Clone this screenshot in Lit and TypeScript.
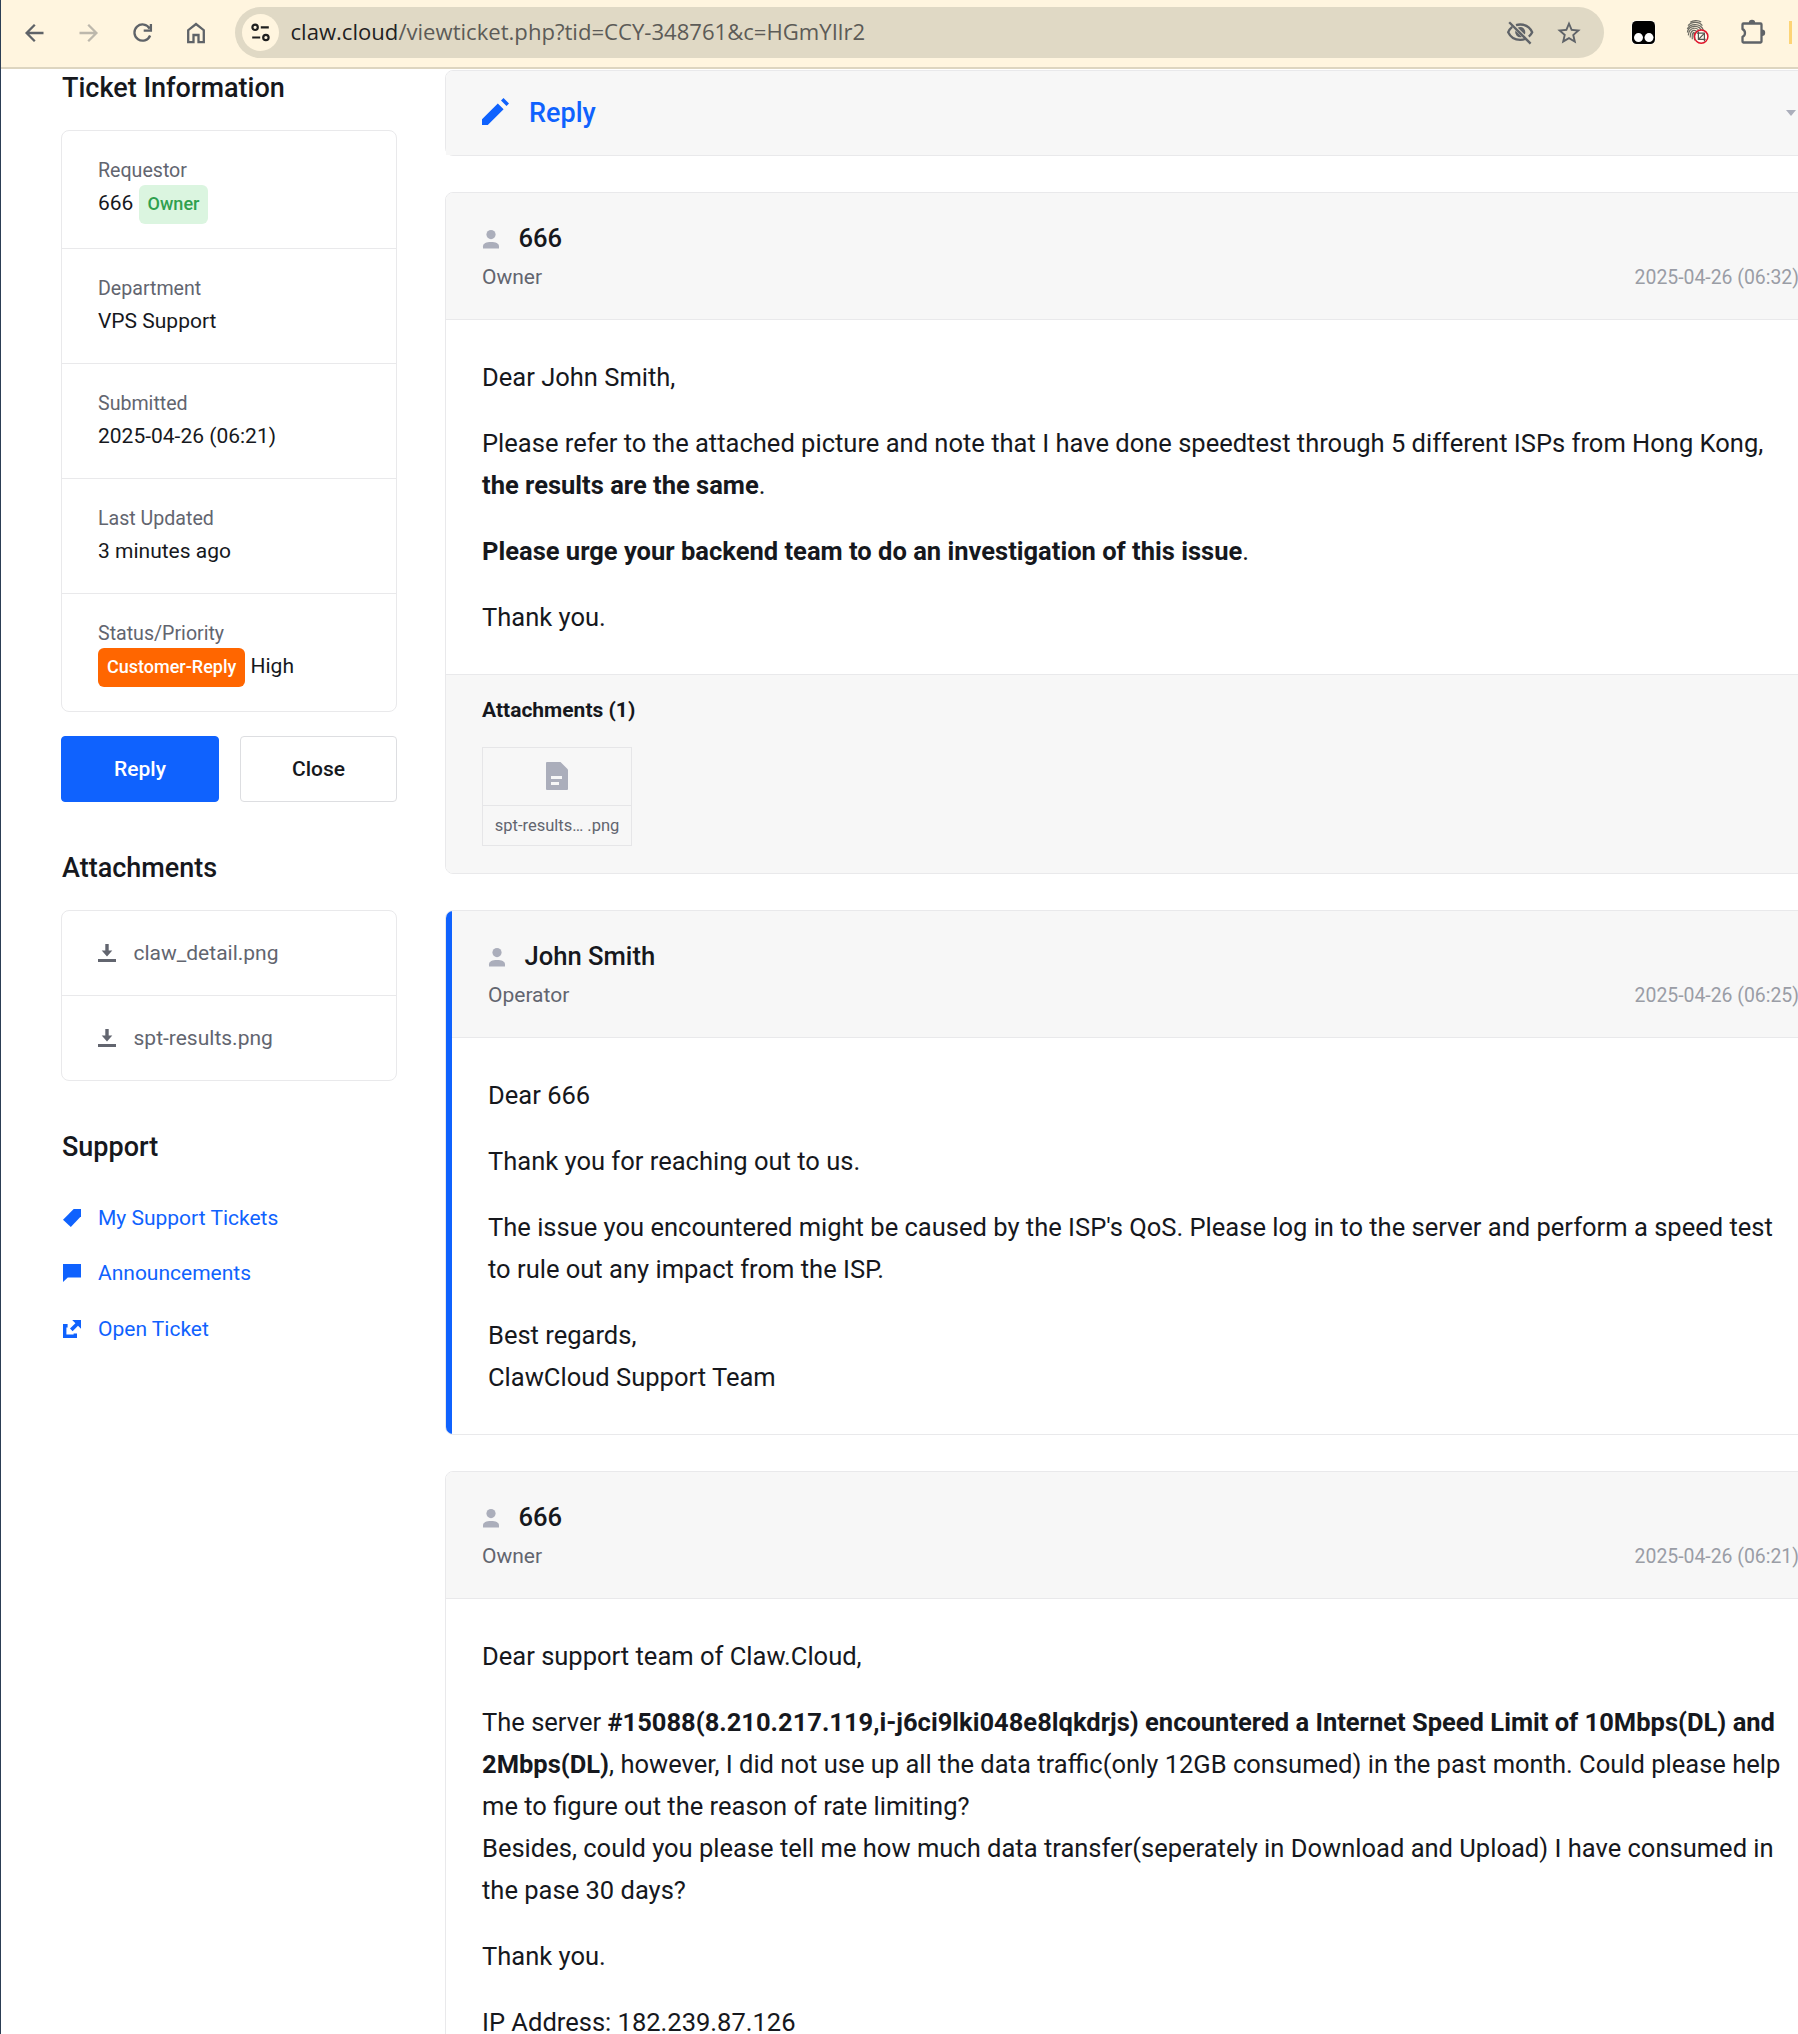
import { LitElement, html, svg, css, nothing, type TemplateResult } from "lit";
import { customElement, property } from "lit/decorators.js";

const personIcon = svg`<circle cx="8" cy="4.6" r="4.6"/><path d="M0 18.4v-2.2c0-2.8 3.4-4.2 8-4.2s8 1.400 8 4.200v2.200z"/>`;

@customElement("browser-bar")
export class BrowserBar extends LitElement {
  static styles = css`
    :host { display: block; }
    .bar {
      box-sizing: border-box; height: 69px; background: #fff5df; border-bottom: 2px solid #ddd5c0;
      display: flex; align-items: center; padding: 0 0 2px 19.5px;
      color: #5f6368; overflow: hidden;
    }
    svg { display: block; flex: none; overflow: visible; }
    .nav { display: flex; gap: 28px; align-items: center; }
    .dim { color: #bdb8ac; }
    .omnibox {
      box-sizing: border-box; width: 1369px; height: 51px; margin-left: 26.5px; border-radius: 26px;
      background: #e0d9c5; display: flex; align-items: center; flex: none; padding: 0 21.5px 0 7px;
    }
    .site { width: 37px; height: 37px; border-radius: 50%; background: #fff5df; display: grid; place-items: center; color: #1f1f1f; flex: none; }
    .url {
      flex: 1; margin-left: 11.5px; padding-bottom: 3px; white-space: nowrap; color: #5c5b57;
      font: 400 22.1px/30px "Open Sans", "Noto Sans", sans-serif;
    }
    .host { color: #1f1f1f; }
    .star { margin-left: 20.5px; }
    .ext { display: flex; align-items: center; margin-left: 26px; gap: 27.7px; }
    .sep { width: 3px; height: 23px; background: #fdd475; margin-left: -5.4px; flex: none; }
  `;
  render() {
    return html`
      <div class="bar">
        <div class="nav">
          <svg width="26" height="26" viewBox="0 0 26 26" fill="none" stroke="currentColor" stroke-width="2.3"><path d="M22.500 13H6M13.800 4.800L5.600 13l8.200 8.200"/></svg>
          <svg class="dim" width="26" height="26" viewBox="0 0 26 26" fill="none" stroke="currentColor" stroke-width="2.3"><path d="M4.500 13H21M13.200 4.800L21.400 13l-8.200 8.200"/></svg>
          <svg width="26" height="26" viewBox="0 0 26 26" fill="none" stroke="currentColor" stroke-width="2.3"><path d="M20.600 8.600A8.100 8.100 0 1 0 21.100 15.500M21.900 4v6.700h-7.200"/></svg>
          <svg width="26" height="26" viewBox="0 0 26 26" fill="none" stroke="currentColor" stroke-width="2.3"><path d="M5.200 22.200V10.200L13 4l7.800 6.200v12H15.500v-7.200h-5v7.200z"/></svg>
        </div>
        <div class="omnibox">
          <div class="site">
            <svg width="19" height="19" viewBox="0 0 19 19" fill="none" stroke="currentColor" stroke-width="2.200"><circle cx="4.100" cy="4.300" r="2.700"/><path d="M9.800 4.300h8M1.200 14.500h8"/><circle cx="14.900" cy="14.500" r="2.700"/></svg>
          </div>
          <div class="url"><span class="host">claw.cloud</span>/viewticket.php?tid=CCY-348761&amp;c=HGmYIlr2</div>
          <svg width="28" height="24" viewBox="0 0 28 24" fill="none" stroke="currentColor" stroke-width="2.300">
            <path d="M10 4.200A13 13 0 0 1 14.200 3.500c5.500 0 9.900 3.200 12 7.700a13 13 0 0 1-3.400 4.400M6.200 5.800A13 13 0 0 0 2.200 11.200c2.100 4.500 6.500 7.700 12 7.700 2 0 3.800-.4 5.500-1.200"/>
            <path d="M14.200 6.100a5.100 5.100 0 0 1 5.100 5.100c0 1-.2 1.700-.6 2.400L11.800 6.700c.7-.4 1.500-.6 2.400-.6zM9.400 9.400l6.600 6.600a5.200 5.200 0 0 1-6.600-6.600z" fill="currentColor" stroke="none"/>
            <path d="M3.200 1.200l21.400 21.400"/>
          </svg>
          <svg class="star" width="28" height="28" viewBox="0 0 24 24" fill="currentColor"><path d="M22 9.240l-7.190-.62L12 2 9.190 8.630 2 9.240l5.460 4.730L5.820 21 12 17.270 18.180 21l-1.630-7.030L22 9.240zM12 15.400l-3.760 2.270 1-4.280-3.320-2.880 4.380-.38L12 6.100l1.710 4.040 4.380.38-3.320 2.880 1 4.280L12 15.400z"/></svg>
        </div>
        <div class="ext">
          <svg width="27" height="27" viewBox="0 0 27 27"><rect x="1.400" y="1.400" width="24" height="24" rx="5" fill="#fff"/><rect x="2" y="2" width="23" height="23" rx="4.500" fill="#000"/><circle cx="8.500" cy="18.600" r="4.500" fill="#fff"/><circle cx="19" cy="18.600" r="4.500" fill="#fff"/></svg>
          <svg width="27" height="27" viewBox="0 0 27 27" fill="none" stroke="#6b6a62" stroke-width="1.200">
            <path d="M5.200 3.200c3-2 8-2.200 11-.2M3 6.600C6.500 2.500 14 2.200 17.400 6.600M2.300 10C4.800 4.200 15.600 3.600 18.300 11M2.400 13.500C3.600 5.600 15.300 5.200 16.600 13M3.300 16.400C4 7.400 13.700 7.200 14.600 14M5.200 18.400C5 9.600 12 9.600 12.500 15M7.300 20.200C6.600 12 10.300 12 10.500 17M9.700 21.500C9 18 8.900 16 9 14.500M11.700 21.500l-.6-3"/>
            <circle cx="16.200" cy="17.600" r="6.700" fill="#fffaf0" stroke="#e0142a" stroke-width="1.500"/>
            <path d="M13.400 12.600v7.800h7.200M12 14.200h7.400v8M14.200 19.600l4.400-4.400" stroke="#55554f" stroke-width="1.200"/>
          </svg>
          <svg width="27" height="27" viewBox="0 0 27 27" fill="none" stroke="currentColor" stroke-width="2.300" stroke-linejoin="round">
            <path d="M4.400 4.500h17.200q.9 0 .9.900v17.200q0 .9-.9.900H4.400q-.9 0-.9-.9v-4.700a4.300 4.300 0 0 0 0-7.800V5.400q0-.9.900-.9z"/>
            <path d="M9.800 4a3.200 3.200 0 0 1 6.400 0zM23 10.600a3.200 3.200 0 0 1 0 6.400z" fill="currentColor" stroke="none"/>
          </svg>
          <div class="sep"></div>
        </div>
      </div>`;
  }
}

@customElement("ticket-sidebar")
export class TicketSidebar extends LitElement {
  static styles = css`
    :host { display: block; padding-top: 1px; }
    svg { display: block; flex: none; overflow: visible; }
    h2 { margin: 0; padding-left: 1px; font-weight: 500; font-size: 27px; line-height: 36px; color: #16181d; white-space: nowrap; }
    .panel { box-sizing: border-box; border: 1px solid #e9e9eb; border-radius: 8px; }
    .info { margin-top: 24px; }
    .row { box-sizing: border-box; height: 115px; padding: 24px 36px 0; border-bottom: 1px solid #e9e9eb; white-space: nowrap; }
    .row.tall { height: 118px; }
    .row:last-child { border-bottom: 0; height: 117px; }
    .label { font-size: 19.6px; line-height: 31px; color: #62656f; }
    .value { display: flex; align-items: baseline; gap: 5.2px; font-size: 21px; line-height: 33px; color: #16181d; }
    .plain .value { line-height: 35px; }
    .badge { font-size: 18px; font-weight: 500; line-height: 37px; padding: 0 9px 2px; border-radius: 6px; margin-top: -1px; }
    .green { background: #dbf5e0; color: #2fa04e; }
    .orange { background: #ff6600; color: #fff; }
    .buttons { display: flex; justify-content: space-between; margin-top: 24px; }
    .btn { box-sizing: border-box; width: 158px; height: 66px; border-radius: 4px; border: 1px solid #dddee1; background: #fff; color: #16181d; font: 500 21px/64px Roboto, sans-serif; text-align: center; padding: 0; }
    .btn.close { width: 157px; }
    .btn.primary { background: #0f62fe; border-color: #0f62fe; color: #fff; }
    .second { margin-top: 48px; }
    .files { margin-top: 24px; }
    .file { box-sizing: border-box; height: 84px; display: flex; align-items: center; padding-left: 36px; gap: 17.5px; font-size: 21px; color: #62656f; }
    .file + .file { border-top: 1px solid #e9e9eb; height: 85px; }
    .third { margin-top: 48px; }
    .links { display: grid; grid-template-rows: 55.5px 54.5px 57px; margin-top: 25px; }
    .link { display: flex; align-items: center; padding-left: 1.5px; gap: 17.5px; font-size: 21px; color: #0f62fe; text-decoration: none; }
  `;
  private info: { label: string; value: TemplateResult; kind: string }[] = [
    { label: "Requestor", value: html`<span>666</span><span class="badge green">Owner</span>`, kind: "tall" },
    { label: "Department", value: html`VPS Support`, kind: "plain" },
    { label: "Submitted", value: html`2025-04-26 (06:21)`, kind: "plain" },
    { label: "Last Updated", value: html`3 minutes ago`, kind: "plain" },
    { label: "Status/Priority", value: html`<span class="badge orange">Customer-Reply</span><span>High</span>`, kind: "" },
  ];
  private links = [
    { text: "My Support Tickets", icon: svg`<path d="M10.700 0H18v7.300L7.800 18 0 10.700z"/>` },
    { text: "Announcements", icon: svg`<path d="M0 0h18v13.500H4.800L0 18z"/>` },
    { text: "Open Ticket", icon: svg`<path d="M0 4h4.600v3.400H3.400v7.200h7.200v-1.200H14V18H0zM9.200 0H18v8.800l-3-3-5.400 5.400L7 8.600l5.400-5.400z"/>` },
  ];
  render() {
    return html`
      <h2>Ticket Information</h2>
      <div class="panel info">
        ${this.info.map((r) => html`<div class="row ${r.kind}"><div class="label">${r.label}</div><div class="value">${r.value}</div></div>`)}
      </div>
      <div class="buttons"><button class="btn primary">Reply</button><button class="btn close">Close</button></div>
      <h2 class="second">Attachments</h2>
      <div class="panel files">
        ${["claw_detail.png", "spt-results.png"].map(
          (f) => html`<div class="file"><svg width="18" height="18" viewBox="0 0 18 18" fill="currentColor"><path d="M7.300 0h3.400v6.400h3.600L9 12.400 3.700 6.400h3.600zM0 14.900h18v3.100H0z"/></svg><span>${f}</span></div>`
        )}
      </div>
      <h2 class="third">Support</h2>
      <nav class="links">
        ${this.links.map((l) => html`<a class="link"><svg width="18" height="18" viewBox="0 0 18 18" fill="currentColor">${l.icon}</svg><span>${l.text}</span></a>`)}
      </nav>`;
  }
}

@customElement("ticket-message")
export class TicketMessage extends LitElement {
  static styles = css`
    :host { display: block; }
    svg { display: block; flex: none; overflow: visible; }
    .card { box-sizing: border-box; border: 1px solid #e9e9eb; border-radius: 8px; background: #fff; display: flex; overflow: hidden; }
    .stripe { width: 6px; flex: none; background: #0f62fe; }
    .main { flex: 1; min-width: 0; }
    .head { box-sizing: border-box; height: 127px; background: #f7f7f7; border-bottom: 1px solid #e9e9eb; padding: 25px 36px 0; }
    .who { display: flex; align-items: center; gap: 19.5px; line-height: 40px; font-size: 25.6px; font-weight: 500; color: #16181d; }
    .who svg { margin: 2px 0 0 1px; }
    .meta { display: flex; justify-content: space-between; line-height: 39px; font-size: 21px; color: #62656f; }
    .date { font-size: 19.4px; color: #9a9da6; white-space: nowrap; margin-right: -1px; }
    .body { padding: 36px; font-size: 25.53px; line-height: 42px; color: #16181d; white-space: nowrap; }
    .body p { margin: 0 0 24px; }
    .body p:last-child { margin: 0; }
    .files { box-sizing: border-box; height: 199px; background: #f7f7f7; border-top: 1px solid #e9e9eb; padding: 19px 36px 0; color: #16181d; }
    .title { font-weight: 700; font-size: 21px; line-height: 33px; }
    .thumb { box-sizing: border-box; width: 150px; height: 99px; margin-top: 20px; border: 1px solid #e6e6e8; }
    .pic { box-sizing: border-box; height: 58px; padding-bottom: 1px; border-bottom: 1px solid #e6e6e8; display: grid; place-items: center; color: #abaebb; }
    .name { line-height: 39px; text-align: center; font-size: 16.5px; color: #62656f; white-space: nowrap; }
  `;
  @property() author = "";
  @property() role = "";
  @property() date = "";
  @property({ type: Boolean }) staff = false;
  @property() file = "";
  @property({ attribute: false }) body: TemplateResult | typeof nothing = nothing;
  render() {
    return html`
      <article class="card">
        ${this.staff ? html`<div class="stripe"></div>` : nothing}
        <div class="main">
          <div class="head">
            <div class="who"><svg width="16" height="18.400" viewBox="0 0 16 18.400" fill="#abaebb">${personIcon}</svg><span>${this.author}</span></div>
            <div class="meta"><span>${this.role}</span><span class="date">${this.date}</span></div>
          </div>
          <div class="body">${this.body}</div>
          ${this.file
            ? html`<div class="files">
                <div class="title">Attachments (1)</div>
                <div class="thumb">
                  <div class="pic"><svg width="22" height="28" viewBox="0 0 22 28"><path fill="currentColor" d="M1 0h13.500L22 7.500V27q0 1-1 1H1q-1 0-1-1V1q0-1 1-1z"/><path fill="#f7f7f7" d="M5 14h11v3H5zM5 20h8v3H5z"/></svg></div>
                  <div class="name">${this.file}</div>
                </div>
              </div>`
            : nothing}
        </div>
      </article>`;
  }
}

@customElement("app-root")
export class AppRoot extends LitElement {
  static styles = css`
    :host { display: block; }
    .page { box-sizing: border-box; width: 1798px; height: 2034px; overflow: hidden; background: #fff; border-left: 1px solid #2c3e55; font-family: Roboto, sans-serif; }
    .cols { display: flex; align-items: flex-start; }
    .side { width: 336px; margin-left: 60px; flex: none; }
    .thread { width: 1390px; margin: 1px 0 0 48px; flex: none; display: flex; flex-direction: column; gap: 36px; }
    .reply { border: 1px solid #e9e9eb; border-radius: 8px; }
    .replyhead { box-sizing: border-box; height: 84px; background: #f7f7f7; border-radius: 7px 7px 0 0; display: flex; align-items: center; padding: 0 38px 0 36px; color: #0f62fe; font-size: 27px; font-weight: 500; }
    .replyhead svg { display: block; margin-right: 20px; margin-top: -4px; }
    .caret { width: 0; height: 0; border: 5px solid transparent; border-top: 6px solid #abaebb; border-bottom: 0; margin: -1px 0 0 auto; }
  `;
  private first = html`
    <p>Dear John Smith,</p>
    <p>Please refer to the attached picture and note that I have done speedtest through 5 different ISPs from Hong Kong,<br><b>the results are the same</b>.</p>
    <p><b>Please urge your backend team to do an investigation of this issue</b>.</p>
    <p>Thank you.</p>`;
  private second = html`
    <p>Dear 666</p>
    <p>Thank you for reaching out to us.</p>
    <p>The issue you encountered might be caused by the ISP's QoS. Please log in to the server and perform a speed test<br>to rule out any impact from the ISP.</p>
    <p>Best regards,<br>ClawCloud Support Team</p>`;
  private third = html`
    <p>Dear support team of Claw.Cloud,</p>
    <p>The server <b>#15088(8.210.217.119,i-j6ci9lki048e8lqkdrjs) encountered a Internet Speed Limit of 10Mbps(DL) and<br>2Mbps(DL)</b>, however, I did not use up all the data traffic(only 12GB consumed) in the past month. Could please help<br>me to figure out the reason of rate limiting?<br>Besides, could you please tell me how much data transfer(seperately in Download and Upload) I have consumed in<br>the pase 30 days?</p>
    <p>Thank you.</p>
    <p>IP Address: 182.239.87.126</p>`;
  render() {
    return html`
      <div class="page">
        <browser-bar></browser-bar>
        <div class="cols">
          <ticket-sidebar class="side"></ticket-sidebar>
          <main class="thread">
            <section class="reply">
              <div class="replyhead">
                <svg width="27" height="27" viewBox="0 0 27 27" fill="currentColor"><path d="M0 27v-5.800L15.800 5.400l5.800 5.800L5.800 27zM19 2.500L21.500 0 27 5.500l-2.500 2.500z"/></svg>
                <span>Reply</span>
                <div class="caret"></div>
              </div>
            </section>
            <ticket-message author="666" role="Owner" date="2025-04-26 (06:32)" file="spt-results… .png" .body=${this.first}></ticket-message>
            <ticket-message author="John Smith" role="Operator" date="2025-04-26 (06:25)" staff .body=${this.second}></ticket-message>
            <ticket-message author="666" role="Owner" date="2025-04-26 (06:21)" .body=${this.third}></ticket-message>
          </main>
        </div>
      </div>`;
  }
}
